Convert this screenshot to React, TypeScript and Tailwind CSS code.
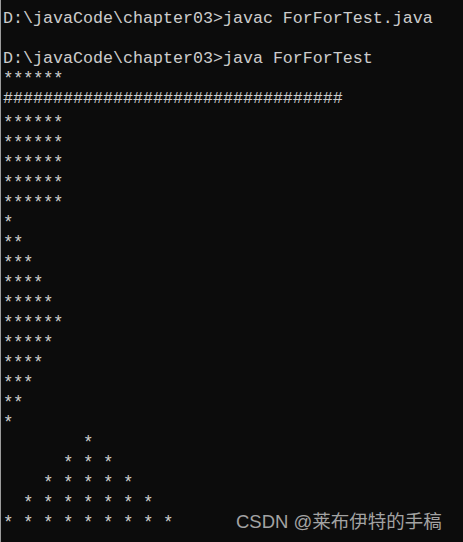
const lines = [
  "D:\\javaCode\\chapter03>javac ForForTest.java",
  "",
  "D:\\javaCode\\chapter03>java ForForTest",
  "******",
  "##################################",
  "******",
  "******",
  "******",
  "******",
  "******",
  "*",
  "**",
  "***",
  "****",
  "*****",
  "******",
  "*****",
  "****",
  "***",
  "**",
  "*",
  "        *",
  "      * * *",
  "    * * * * *",
  "  * * * * * * *",
  "* * * * * * * * *",
];

const isStars = (s?: string) => s !== undefined && /^[* ]+$/.test(s);

export default function App() {
  return (
    <div className="relative w-[463px] h-[542px] overflow-hidden bg-[#0c0c0c] border-l border-[#9c9c9c]">
      <pre className="pl-[2px] pt-[9px] m-0 font-['Liberation_Mono',monospace] text-[16.67px] leading-[20px] text-[#cccccc] whitespace-pre">
        {lines.map((l, i) => (
          <div key={i} className="h-[20px]">
            {isStars(l) ? (
              // console font draws * bigger and lower, keep 10px per cell
              <span
                className={
                  "inline-block text-[17.5px] leading-[20px] tracking-[-0.5px] " +
                  (i === lines.length - 1 || isStars(lines[i + 1]) ? "translate-y-[4px]" : "translate-y-0")
                }
              >
                {l}
              </span>
            ) : (
              l
            )}
          </div>
        ))}
      </pre>
      <div className="absolute left-[235px] top-[509px] font-['Liberation_Sans','Noto_Sans_CJK_SC',sans-serif] text-[18.5px] leading-[26px] text-[#a3a3a3]">
        CSDN @莱布伊特的手稿
      </div>
    </div>
  );
}
